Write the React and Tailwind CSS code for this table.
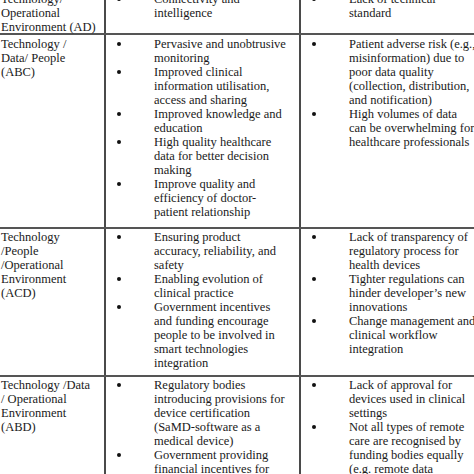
const rows = [
  {
    h: "h-[44px]",
    pt: "pt-[1px]",
    label: ["Technology/", "Operational", "Environment (AD)"],
    pros: [["Connectivity and", "intelligence"]],
    cons: [["Lack of technical", "standard"]],
  },
  {
    h: "h-[194px]",
    pt: "pt-[1.5px]",
    label: ["Technology /", "Data/ People", "(ABC)"],
    pros: [
      ["Pervasive and unobtrusive", "monitoring"],
      ["Improved clinical", "information utilisation,", "access and sharing"],
      ["Improved knowledge and", "education"],
      ["High quality healthcare", "data for better decision", "making"],
      ["Improve quality and", "efficiency of doctor-", "patient relationship"],
    ],
    cons: [
      [
        "Patient adverse risk (e.g.,",
        "misinformation) due to",
        "poor data quality",
        "(collection, distribution,",
        "and notification)",
      ],
      ["High volumes of data", "can be overwhelming for", "healthcare professionals"],
    ],
  },
  {
    h: "h-[148px]",
    pt: "pt-[1px]",
    label: ["Technology", "/People", "/Operational", "Environment", "(ACD)"],
    pros: [
      ["Ensuring product", "accuracy, reliability, and", "safety"],
      ["Enabling evolution of", "clinical practice"],
      [
        "Government incentives",
        "and funding encourage",
        "people to be involved in",
        "smart technologies",
        "integration",
      ],
    ],
    cons: [
      ["Lack of transparency of", "regulatory process for", "health devices"],
      ["Tighter regulations can", "hinder developer\u2019s new", "innovations"],
      ["Change management and", "clinical workflow", "integration"],
    ],
  },
  {
    h: "h-[140px]",
    pt: "pt-[1px]",
    label: ["Technology /Data", "/ Operational", "Environment", "(ABD)"],
    pros: [
      [
        "Regulatory bodies",
        "introducing provisions for",
        "device certification",
        "(SaMD-software as a",
        "medical device)",
      ],
      ["Government providing", "financial incentives for", "remote care"],
    ],
    cons: [
      ["Lack of approval for", "devices used in clinical", "settings"],
      [
        "Not all types of remote",
        "care are recognised by",
        "funding bodies equally",
        "(e.g. remote data",
        "monitoring)",
      ],
    ],
  },
];

const Lines = ({ lines }) => (
  <div>
    {lines.map((l, i) => (
      <div key={i} className="whitespace-nowrap">
        {l}
      </div>
    ))}
  </div>
);

const BulletList = ({ items, pt }) => (
  <div className={pt}>
    {items.map((lines, i) => (
      <div key={i} className="flex">
        <div className="w-[48px] shrink-0 h-[14px] flex items-center pl-[11px]">
          <span className="w-[4px] h-[4px] rounded-full bg-[#111]" />
        </div>
        <Lines lines={lines} />
      </div>
    ))}
  </div>
);

export default function App() {
  return (
    <div className="w-[474px] h-[474px] overflow-hidden bg-white">
      <div
        className="mt-[-9px] text-[12.5px] leading-[14px] text-[#1a1a1a]"
        style={{ fontFamily: '"Liberation Serif", "Times New Roman", serif' }}
      >
        {rows.map((r, i) => (
          <div key={i} className={`flex border-b-2 border-[#555] ${r.h}`}>
            <div className={`w-[106px] shrink-0 border-r-2 border-[#4a4a4a] pl-[1px] ${r.pt}`}>
              <Lines lines={r.label} />
            </div>
            <div className="w-[195px] shrink-0 border-r-2 border-[#4a4a4a]">
              <BulletList items={r.pros} pt={r.pt} />
            </div>
            <div className="flex-1 overflow-hidden">
              <BulletList items={r.cons} pt={r.pt} />
            </div>
          </div>
        ))}
      </div>
    </div>
  );
}
